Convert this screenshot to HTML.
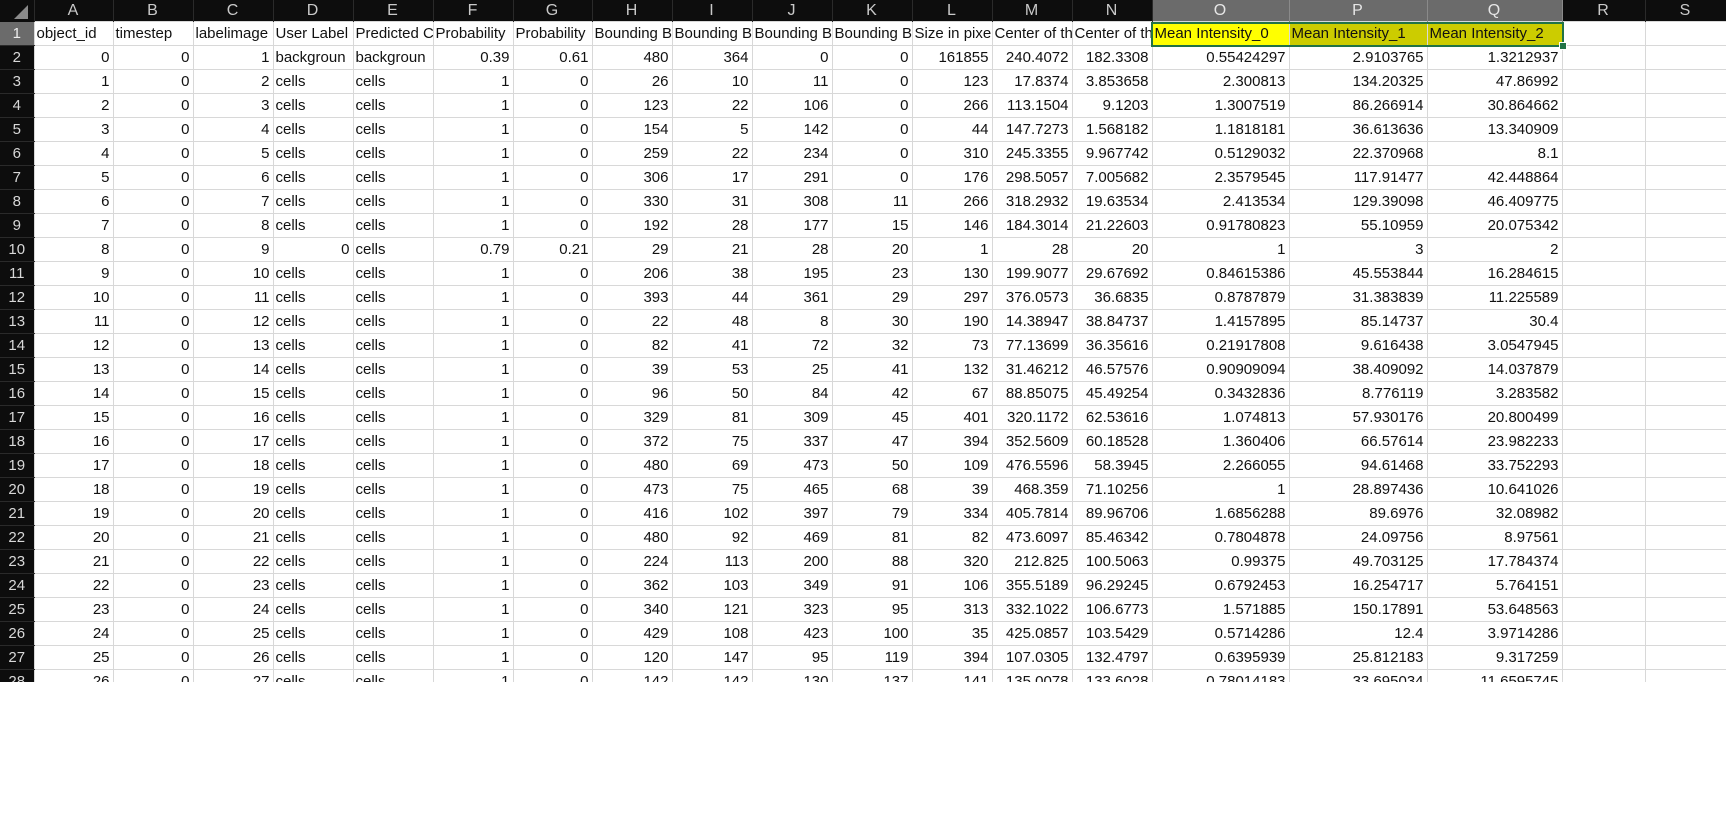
<!DOCTYPE html>
<html><head><meta charset="utf-8"><style>
body{margin:0;background:#fff;width:1726px;height:839px;overflow:hidden;font-family:"Liberation Sans",sans-serif}
#wrap{position:absolute;left:0;top:0;width:1726px;height:682px;overflow:hidden;background:#0d0d0d}
table{border-collapse:collapse;table-layout:fixed;width:1726px;font-size:15px;color:#111}
td{height:23px;padding:0 3px 0 2px;white-space:nowrap;overflow:hidden;text-align:right;border:1px solid #d8d8d8;background:#fff;line-height:23px}
td.l{text-align:left}
tr.h td{height:21px;background:#0d0d0d;color:#c9c9c9;text-align:center;font-size:16px;border:none;border-right:1px solid #2a2a2a;line-height:21px}
tr.h td.s{background:#6b6b6b;color:#e6e6e6;border-right:1px solid #8a8a8a}
td.r{background:#0d0d0d;color:#d8d8d8;text-align:center;border:none;border-bottom:1px solid #2a2a2a;font-size:15px;padding:0}
td.rs{background:#6b6b6b;color:#eee}
td.y0{background:#ffff00}
td.y1{background:#cccc00}
#sel{position:absolute;left:1151px;top:22px;width:409px;height:21px;border:2px solid #217346;pointer-events:none}
#hd{position:absolute;left:1559px;top:42px;width:6px;height:6px;background:#217346;border:1px solid #fff}
#corner{position:absolute;left:14px;top:5px;width:0;height:0;border-left:14px solid transparent;border-bottom:14px solid #8a8a8a}
</style></head><body>
<div id="wrap">
<table>
<colgroup><col style="width:34px"><col style="width:79px"><col style="width:80px"><col style="width:80px"><col style="width:80px"><col style="width:80px"><col style="width:80px"><col style="width:79px"><col style="width:80px"><col style="width:80px"><col style="width:80px"><col style="width:80px"><col style="width:80px"><col style="width:80px"><col style="width:80px"><col style="width:137px"><col style="width:138px"><col style="width:135px"><col style="width:83px"><col style="width:81px"></colgroup>
<tr class="h"><td></td><td>A</td><td>B</td><td>C</td><td>D</td><td>E</td><td>F</td><td>G</td><td>H</td><td>I</td><td>J</td><td>K</td><td>L</td><td>M</td><td>N</td><td class="s">O</td><td class="s">P</td><td class="s">Q</td><td>R</td><td>S</td></tr>
<tr><td class="r rs">1</td><td class="l">object_id</td><td class="l">timestep</td><td class="l">labelimage</td><td class="l">User Label</td><td class="l">Predicted Class</td><td class="l">Probability</td><td class="l">Probability</td><td class="l">Bounding Box</td><td class="l">Bounding Box</td><td class="l">Bounding Box</td><td class="l">Bounding Box</td><td class="l">Size in pixels</td><td class="l">Center of the</td><td class="l">Center of the</td><td class="l y0">Mean Intensity_0</td><td class="l y1">Mean Intensity_1</td><td class="l y1">Mean Intensity_2</td><td></td><td></td></tr>
<tr><td class="r">2</td><td>0</td><td>0</td><td>1</td><td class="l">backgroun</td><td class="l">backgroun</td><td>0.39</td><td>0.61</td><td>480</td><td>364</td><td>0</td><td>0</td><td>161855</td><td>240.4072</td><td>182.3308</td><td>0.55424297</td><td>2.9103765</td><td>1.3212937</td><td></td><td></td></tr>
<tr><td class="r">3</td><td>1</td><td>0</td><td>2</td><td class="l">cells</td><td class="l">cells</td><td>1</td><td>0</td><td>26</td><td>10</td><td>11</td><td>0</td><td>123</td><td>17.8374</td><td>3.853658</td><td>2.300813</td><td>134.20325</td><td>47.86992</td><td></td><td></td></tr>
<tr><td class="r">4</td><td>2</td><td>0</td><td>3</td><td class="l">cells</td><td class="l">cells</td><td>1</td><td>0</td><td>123</td><td>22</td><td>106</td><td>0</td><td>266</td><td>113.1504</td><td>9.1203</td><td>1.3007519</td><td>86.266914</td><td>30.864662</td><td></td><td></td></tr>
<tr><td class="r">5</td><td>3</td><td>0</td><td>4</td><td class="l">cells</td><td class="l">cells</td><td>1</td><td>0</td><td>154</td><td>5</td><td>142</td><td>0</td><td>44</td><td>147.7273</td><td>1.568182</td><td>1.1818181</td><td>36.613636</td><td>13.340909</td><td></td><td></td></tr>
<tr><td class="r">6</td><td>4</td><td>0</td><td>5</td><td class="l">cells</td><td class="l">cells</td><td>1</td><td>0</td><td>259</td><td>22</td><td>234</td><td>0</td><td>310</td><td>245.3355</td><td>9.967742</td><td>0.5129032</td><td>22.370968</td><td>8.1</td><td></td><td></td></tr>
<tr><td class="r">7</td><td>5</td><td>0</td><td>6</td><td class="l">cells</td><td class="l">cells</td><td>1</td><td>0</td><td>306</td><td>17</td><td>291</td><td>0</td><td>176</td><td>298.5057</td><td>7.005682</td><td>2.3579545</td><td>117.91477</td><td>42.448864</td><td></td><td></td></tr>
<tr><td class="r">8</td><td>6</td><td>0</td><td>7</td><td class="l">cells</td><td class="l">cells</td><td>1</td><td>0</td><td>330</td><td>31</td><td>308</td><td>11</td><td>266</td><td>318.2932</td><td>19.63534</td><td>2.413534</td><td>129.39098</td><td>46.409775</td><td></td><td></td></tr>
<tr><td class="r">9</td><td>7</td><td>0</td><td>8</td><td class="l">cells</td><td class="l">cells</td><td>1</td><td>0</td><td>192</td><td>28</td><td>177</td><td>15</td><td>146</td><td>184.3014</td><td>21.22603</td><td>0.91780823</td><td>55.10959</td><td>20.075342</td><td></td><td></td></tr>
<tr><td class="r">10</td><td>8</td><td>0</td><td>9</td><td>0</td><td class="l">cells</td><td>0.79</td><td>0.21</td><td>29</td><td>21</td><td>28</td><td>20</td><td>1</td><td>28</td><td>20</td><td>1</td><td>3</td><td>2</td><td></td><td></td></tr>
<tr><td class="r">11</td><td>9</td><td>0</td><td>10</td><td class="l">cells</td><td class="l">cells</td><td>1</td><td>0</td><td>206</td><td>38</td><td>195</td><td>23</td><td>130</td><td>199.9077</td><td>29.67692</td><td>0.84615386</td><td>45.553844</td><td>16.284615</td><td></td><td></td></tr>
<tr><td class="r">12</td><td>10</td><td>0</td><td>11</td><td class="l">cells</td><td class="l">cells</td><td>1</td><td>0</td><td>393</td><td>44</td><td>361</td><td>29</td><td>297</td><td>376.0573</td><td>36.6835</td><td>0.8787879</td><td>31.383839</td><td>11.225589</td><td></td><td></td></tr>
<tr><td class="r">13</td><td>11</td><td>0</td><td>12</td><td class="l">cells</td><td class="l">cells</td><td>1</td><td>0</td><td>22</td><td>48</td><td>8</td><td>30</td><td>190</td><td>14.38947</td><td>38.84737</td><td>1.4157895</td><td>85.14737</td><td>30.4</td><td></td><td></td></tr>
<tr><td class="r">14</td><td>12</td><td>0</td><td>13</td><td class="l">cells</td><td class="l">cells</td><td>1</td><td>0</td><td>82</td><td>41</td><td>72</td><td>32</td><td>73</td><td>77.13699</td><td>36.35616</td><td>0.21917808</td><td>9.616438</td><td>3.0547945</td><td></td><td></td></tr>
<tr><td class="r">15</td><td>13</td><td>0</td><td>14</td><td class="l">cells</td><td class="l">cells</td><td>1</td><td>0</td><td>39</td><td>53</td><td>25</td><td>41</td><td>132</td><td>31.46212</td><td>46.57576</td><td>0.90909094</td><td>38.409092</td><td>14.037879</td><td></td><td></td></tr>
<tr><td class="r">16</td><td>14</td><td>0</td><td>15</td><td class="l">cells</td><td class="l">cells</td><td>1</td><td>0</td><td>96</td><td>50</td><td>84</td><td>42</td><td>67</td><td>88.85075</td><td>45.49254</td><td>0.3432836</td><td>8.776119</td><td>3.283582</td><td></td><td></td></tr>
<tr><td class="r">17</td><td>15</td><td>0</td><td>16</td><td class="l">cells</td><td class="l">cells</td><td>1</td><td>0</td><td>329</td><td>81</td><td>309</td><td>45</td><td>401</td><td>320.1172</td><td>62.53616</td><td>1.074813</td><td>57.930176</td><td>20.800499</td><td></td><td></td></tr>
<tr><td class="r">18</td><td>16</td><td>0</td><td>17</td><td class="l">cells</td><td class="l">cells</td><td>1</td><td>0</td><td>372</td><td>75</td><td>337</td><td>47</td><td>394</td><td>352.5609</td><td>60.18528</td><td>1.360406</td><td>66.57614</td><td>23.982233</td><td></td><td></td></tr>
<tr><td class="r">19</td><td>17</td><td>0</td><td>18</td><td class="l">cells</td><td class="l">cells</td><td>1</td><td>0</td><td>480</td><td>69</td><td>473</td><td>50</td><td>109</td><td>476.5596</td><td>58.3945</td><td>2.266055</td><td>94.61468</td><td>33.752293</td><td></td><td></td></tr>
<tr><td class="r">20</td><td>18</td><td>0</td><td>19</td><td class="l">cells</td><td class="l">cells</td><td>1</td><td>0</td><td>473</td><td>75</td><td>465</td><td>68</td><td>39</td><td>468.359</td><td>71.10256</td><td>1</td><td>28.897436</td><td>10.641026</td><td></td><td></td></tr>
<tr><td class="r">21</td><td>19</td><td>0</td><td>20</td><td class="l">cells</td><td class="l">cells</td><td>1</td><td>0</td><td>416</td><td>102</td><td>397</td><td>79</td><td>334</td><td>405.7814</td><td>89.96706</td><td>1.6856288</td><td>89.6976</td><td>32.08982</td><td></td><td></td></tr>
<tr><td class="r">22</td><td>20</td><td>0</td><td>21</td><td class="l">cells</td><td class="l">cells</td><td>1</td><td>0</td><td>480</td><td>92</td><td>469</td><td>81</td><td>82</td><td>473.6097</td><td>85.46342</td><td>0.7804878</td><td>24.09756</td><td>8.97561</td><td></td><td></td></tr>
<tr><td class="r">23</td><td>21</td><td>0</td><td>22</td><td class="l">cells</td><td class="l">cells</td><td>1</td><td>0</td><td>224</td><td>113</td><td>200</td><td>88</td><td>320</td><td>212.825</td><td>100.5063</td><td>0.99375</td><td>49.703125</td><td>17.784374</td><td></td><td></td></tr>
<tr><td class="r">24</td><td>22</td><td>0</td><td>23</td><td class="l">cells</td><td class="l">cells</td><td>1</td><td>0</td><td>362</td><td>103</td><td>349</td><td>91</td><td>106</td><td>355.5189</td><td>96.29245</td><td>0.6792453</td><td>16.254717</td><td>5.764151</td><td></td><td></td></tr>
<tr><td class="r">25</td><td>23</td><td>0</td><td>24</td><td class="l">cells</td><td class="l">cells</td><td>1</td><td>0</td><td>340</td><td>121</td><td>323</td><td>95</td><td>313</td><td>332.1022</td><td>106.6773</td><td>1.571885</td><td>150.17891</td><td>53.648563</td><td></td><td></td></tr>
<tr><td class="r">26</td><td>24</td><td>0</td><td>25</td><td class="l">cells</td><td class="l">cells</td><td>1</td><td>0</td><td>429</td><td>108</td><td>423</td><td>100</td><td>35</td><td>425.0857</td><td>103.5429</td><td>0.5714286</td><td>12.4</td><td>3.9714286</td><td></td><td></td></tr>
<tr><td class="r">27</td><td>25</td><td>0</td><td>26</td><td class="l">cells</td><td class="l">cells</td><td>1</td><td>0</td><td>120</td><td>147</td><td>95</td><td>119</td><td>394</td><td>107.0305</td><td>132.4797</td><td>0.6395939</td><td>25.812183</td><td>9.317259</td><td></td><td></td></tr>
<tr><td class="r">28</td><td>26</td><td>0</td><td>27</td><td class="l">cells</td><td class="l">cells</td><td>1</td><td>0</td><td>142</td><td>142</td><td>130</td><td>137</td><td>141</td><td>135.0078</td><td>133.6028</td><td>0.78014183</td><td>33.695034</td><td>11.6595745</td><td></td><td></td></tr>
</table>
<div id="corner"></div>
<div id="sel"></div><div id="hd"></div>
</div>
</body></html>
